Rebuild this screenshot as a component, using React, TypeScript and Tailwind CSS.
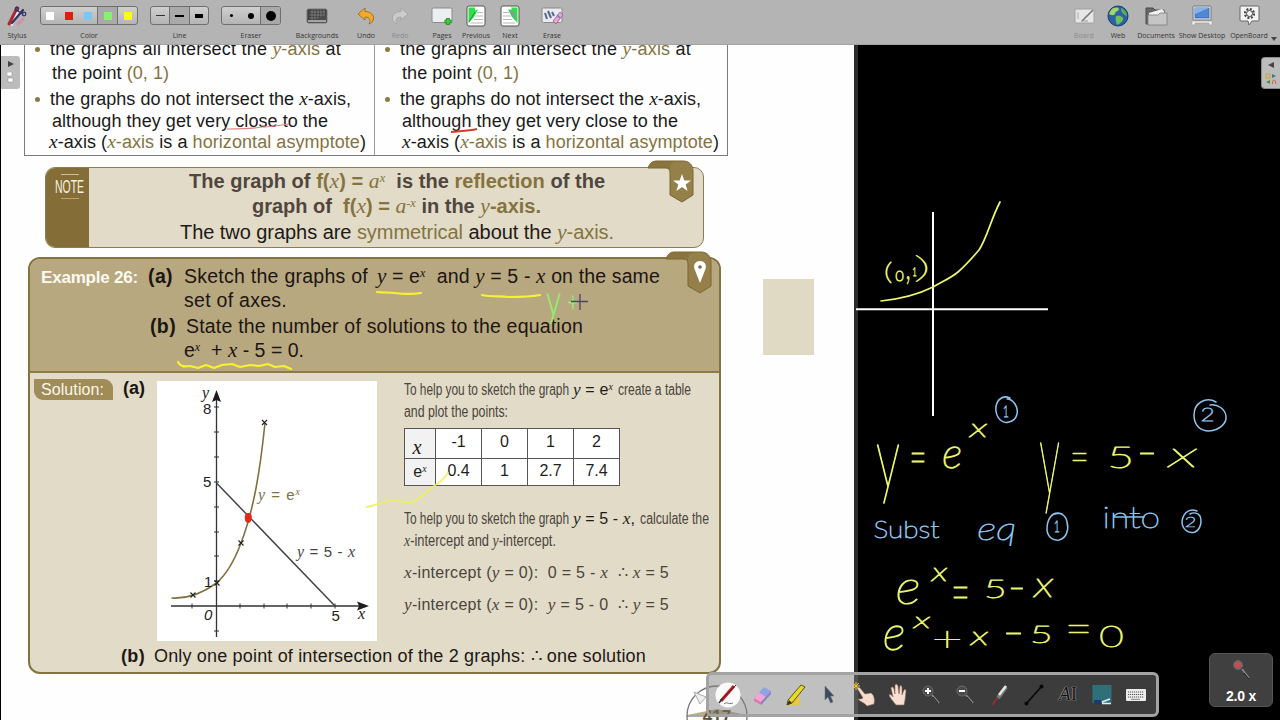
import { useLayoutEffect, useRef, type ReactNode } from "react";

/* ---------- text helpers ---------- */

function Fit({ w, narrow, className = "", children }: { w: number; narrow?: boolean; className?: string; children: ReactNode }) {
  const ref = useRef<HTMLSpanElement>(null);
  useLayoutEffect(() => {
    const el = ref.current;
    if (!el) return;
    el.style.letterSpacing = "0px";
    el.style.transform = "none";
    const natural = el.getBoundingClientRect().width;
    if (narrow) {
      el.style.transform = `scaleX(${w / natural})`;
    } else {
      const count = (el.textContent || "").length;
      el.style.letterSpacing = `${(w - natural) / count}px`;
    }
  }, [w, narrow]);
  return (
    <span className={`block shrink-0 whitespace-pre ${className}`} style={{ width: w }}>
      <span ref={ref} className="inline-block origin-left">
        {children}
      </span>
    </span>
  );
}

const V = ({ children }: { children: ReactNode }) => (
  <i className="font-['Liberation_Serif',serif] text-[1.08em] leading-none font-normal italic">{children}</i>
);
const Sup = ({ children }: { children: ReactNode }) => (
  <i className="relative -top-[0.5em] font-['Liberation_Serif',serif] text-[0.62em] leading-none font-normal italic">{children}</i>
);
const Br = ({ children }: { children: ReactNode }) => <span className="text-[#84733f]">{children}</span>;

/* ---------- pen writing ---------- */

const ctx = document.createElement("canvas").getContext("2d")!;

type InkProps = { t: string; x: number; y: number; w: number; h: number; c?: string; slant?: boolean; sw?: number };

function Ink({ t, x, y, w, h, c = "#e9f36c", slant, sw = 0.9 }: InkProps) {
  ctx.font = `${slant ? "italic " : ""}100 100px Lato`;
  const m = ctx.measureText(t);
  const iw = m.actualBoundingBoxRight + m.actualBoundingBoxLeft;
  const ih = m.actualBoundingBoxAscent + m.actualBoundingBoxDescent;
  const sx = w / iw;
  const sy = h / ih;
  const tx = x + m.actualBoundingBoxLeft * sx;
  const ty = y + m.actualBoundingBoxAscent * sy;
  return (
    <text
      transform={`matrix(${sx} 0 0 ${sy} ${tx} ${ty})`}
      fill={c}
      stroke={c}
      strokeWidth={sw}
      strokeLinejoin="round"
      vectorEffect="non-scaling-stroke"
      className={slant ? "font-['Lato',sans-serif] text-[100px] font-thin italic" : "font-['Lato',sans-serif] text-[100px] font-thin"}
    >
      {t}
    </text>
  );
}

const BLUE = "#8cc4ee";

function BoardInk() {
  return (
    <svg className="pointer-events-none absolute inset-0" width="1280" height="720" viewBox="0 0 1280 720" fill="none">
      <path d="M933 212V416M856 309.3H1048" stroke="#fff" strokeWidth="2" />
      <path d="M881 301C900 299 917 295 933 287C943 281 951 278 958 272C966 265 973 257 979 250C987 238 991 219 1000 202" stroke="#eef56a" strokeWidth="1.7" strokeLinecap="round" />
      <Ink t="(" x={886} y={262} w={5} h={21} sw={1.1} />
      <Ink t="0" x={896} y={271} w={7} h={10} sw={1.1} />
      <Ink t="," x={907} y={276} w={2} h={8} />
      <Ink t="1" x={913} y={268} w={3} h={8} />
      <Ink t=")" x={916} y={255} w={11} h={27} sw={0.8} />

      <Ink t="y" x={877} y={444} w={22} h={58} sw={1.3} />
      <Ink t="=" x={912} y={452} w={12} h={9} sw={1} />
      <Ink t="e" x={944} y={447} w={16} h={21} slant sw={1.3} />
      <Ink t="x" x={969} y={424} w={18} h={13} slant sw={1.3} />
      <Ink t="y" x={1040} y={442} w={19} h={71} sw={1.3} />
      <Ink t="=" x={1073} y={453} w={13} h={8} sw={1} />
      <Ink t="5" x={1111} y={447} w={19} h={21} sw={1.3} />
      <Ink t="-" x={1140} y={453} w={14} h={1} sw={0.8} />
      <Ink t="x" x={1167} y={449} w={30} h={18} slant sw={1.3} />

      <g stroke={BLUE} strokeWidth="1.5" strokeLinecap="round">
        <path d="M1010 398C1001 394 995 402 996 411C997 419 1003 424 1009 422C1018 420 1019 410 1015 404C1013 401 1010 399 1007 399" />
        <path d="M1216 402C1206 396 1194 403 1194 415C1194 425 1200 431 1209 431C1219 430 1227 424 1226 416C1225 409 1218 404 1210 405" />
        <path d="M1062 514C1051 510 1047 521 1047 529C1047 536 1052 541 1059 540C1067 538 1069 529 1067 522C1066 515 1060 512 1055 514" />
        <path d="M1197 511C1188 507 1182 515 1182 523C1183 530 1189 534 1195 532C1201 529 1202 521 1200 516C1198 513 1194 512 1190 514" />
        <path d="M1114 517H1144" />
      </g>
      <Ink t="1" x={1004} y={406} w={4} h={11} c={BLUE} />
      <Ink t="2" x={1202} y={408} w={11} h={13} c={BLUE} sw={1} />
      <Ink t="Subst" x={875} y={520} w={64} h={18} c={BLUE} sw={1} />
      <Ink t="eq" x={979} y={524} w={35} h={22} c={BLUE} slant sw={1} />
      <Ink t="1" x={1055} y={521} w={4} h={11} c={BLUE} />
      <Ink t="into" x={1105} y={507} w={53} h={21} c={BLUE} sw={0.9} />
      <Ink t="2" x={1186} y={517} w={9} h={10} c={BLUE} sw={0.9} />

      <Ink t="e" x={898} y={580} w={20} h={24} slant sw={1.3} />
      <Ink t="x" x={931} y={568} w={16} h={13} slant sw={1.3} />
      <Ink t="=" x={954} y={587} w={13} h={11} sw={1} />
      <Ink t="5" x={987} y={580} w={16} h={18} sw={1.3} />
      <Ink t="-" x={1011} y={587.5} w={12} h={1} sw={0.8} />
      <Ink t="x" x={1033} y={579} w={20} h={18} slant sw={1.3} />

      <Ink t="e" x={885} y={625} w={18} h={25} slant sw={1.3} />
      <Ink t="x" x={913} y={617} w={17} h={11} slant sw={1.3} />
      <Ink t="+" x={935} y={631} w={25} h={17} sw={1.1} />
      <Ink t="x" x={970} y={632} w={18} h={13} slant sw={1.3} />
      <Ink t="-" x={1006} y={633} w={15} h={1} sw={0.8} />
      <Ink t="5" x={1033} y={626} w={16} h={17} sw={1.3} />
      <Ink t="=" x={1069} y={626} w={19} h={7} sw={1} />
      <Ink t="0" x={1101} y={626} w={21} h={21} sw={1.3} />

      <path d="M227 129C242 129 252 129 262 127C272 127 280 125 289 124" stroke="#d98a80" strokeWidth="1.1" />
      <path d="M451 132C460 131 468 131 477 129" stroke="#d83a2e" strokeWidth="2" />
      <g stroke="#f6f22e" strokeWidth="2.2" strokeLinecap="round" strokeLinejoin="round">
        <path d="M377 292C384 293 389 292 395 293C402 294 414 294 421 293" />
        <path d="M482 295C490 297 500 296 509 297C520 297 530 297 540 295" />
        <path d="M178 362C180 366 183 367 190 366L198 368L206 365L214 368L222 365L232 364L240 367L250 365L259 366L268 364L275 367L284 366L291 369" />
      </g>
      <path d="M366 507C374 506 381 502 390 501C398 500 405 503 412 502C421 499 427 490 437 484C442 480 446 478 448 472" stroke="#eef05c" strokeWidth="2" opacity=".85" />
      <Ink t="y" x={547} y={294} w={13} h={28} c="#93ec6e" sw={1.5} />
      <Ink t="+" x={569} y={296} w={8} h={13} c="#93ec6e" sw={1.3} />
      <path d="M571 301.500H588M580 294V310" stroke="#4a4466" strokeWidth="1.3" />
      <path d="M248 514C245 514 245 521 248 522C251 522 252 515 249 514Z" fill="#e02a1c" stroke="#e02a1c" strokeWidth="2" />
    </svg>
  );
}

/* ---------- top toolbar ---------- */

function Tool({ label, className, dim, children }: { label: string; className: string; dim?: boolean; children?: ReactNode }) {
  return (
    <div className={`flex h-full shrink-0 flex-col items-center ${className}`}>
      <div className="flex h-[31px] items-center justify-center">{children}</div>
      <span className={`text-[7px] leading-[9px] whitespace-nowrap ${dim ? "text-[#8c8c8c]" : "text-[#343434]"}`}>{label}</span>
    </div>
  );
}

const group = "flex h-[19px] overflow-hidden rounded-[3px] border border-[#6f6f6f] bg-linear-to-b from-[#cfcfcf] to-[#b4b4b4]";
const cell = "flex flex-1 items-center justify-center";

function TopBar() {
  return (
    <header className="flex h-[45px] shrink-0 border-b border-[#a2a2a2] bg-[#b4b4b4] font-['Open_Sans',sans-serif]">
      <Tool label="Stylus" className="w-[34px]">
        <svg width="22" height="22" viewBox="0 0 22 22" fill="none" strokeLinecap="round">
          <path d="M3 19L11 3" stroke="#b3262e" strokeWidth="3" />
          <path d="M6 20L13 5" stroke="#e9e9ee" strokeWidth="2" />
          <path d="M6 18L17 5" stroke="#2c3566" strokeWidth="2.2" />
          <path d="M10 5L17 9" stroke="#2c3566" strokeWidth="1.4" />
          <circle cx="11" cy="4" r="1.800" stroke="#2c3566" strokeWidth="1.2" />
          <circle cx="18" cy="9" r="1.800" stroke="#2c3566" strokeWidth="1.200" />
          <path d="M12 19L17 14" stroke="#d58cb4" strokeWidth="3" />
        </svg>
      </Tool>
      <Tool label="Color" className="ml-[6px] w-[98px]">
        <div className={`${group} w-[98px]`}>
          <div className={cell}><i className="size-[8px] bg-white" /></div>
          <div className={cell}><i className="size-[8px] bg-[#dd1f0e]" /></div>
          <div className={cell}><i className="size-[8px] bg-[#7cc6f6]" /></div>
          <div className={`${cell} border-x border-[#6f6f6f] bg-[#a9a9a9]`}><i className="size-[8px] bg-[#86f26a]" /></div>
          <div className={cell}><i className="size-[8px] bg-[#fbfb14]" /></div>
        </div>
      </Tool>
      <Tool label="Line" className="ml-[12px] w-[59px]">
        <div className={`${group} w-[59px]`}>
          <div className={cell}><i className="h-px w-[9px] bg-[#333]" /></div>
          <div className={`${cell} border-x border-[#6f6f6f] bg-[#a9a9a9]`}><i className="h-[2px] w-[9px] bg-black" /></div>
          <div className={cell}><i className="h-[4px] w-[8px] bg-black" /></div>
        </div>
      </Tool>
      <Tool label="Eraser" className="ml-[12px] w-[60px]">
        <div className={`${group} w-[60px]`}>
          <div className={cell}><i className="size-[3px] rounded-full bg-black" /></div>
          <div className={cell}><i className="size-[6px] rounded-full bg-black" /></div>
          <div className={`${cell} border-l border-[#6f6f6f] bg-[#a9a9a9]`}><i className="size-[10px] rounded-full bg-black" /></div>
        </div>
      </Tool>
      <Tool label="Backgrounds" className="ml-[11px] w-[50px]">
        <svg width="22" height="16" viewBox="0 0 22 16">
          <rect x="1" y="1" width="20" height="14" rx="1.500" fill="#3c3c3c" stroke="#777" />
          <path d="M3 4H19M3 7H19M3 10H19M6 2V14M9 2V14M12 2V14M15 2V14M18 2V14" stroke="#8d8d8d" strokeWidth=".7" />
          <path d="M2 14L20 7V14Z" fill="#4a4a4a" />
          <path d="M2 13H20" stroke="#c4c4c4" strokeWidth="1.500" />
        </svg>
      </Tool>
      <Tool label="Undo" className="ml-[7px] w-[34px]">
        <svg width="18" height="18" viewBox="0 0 18 18">
          <path d="M1 7L8 1V4.500C14 4.500 17 8 16.500 12C16 15 14 16.500 12 17C14 13.500 13 10 8 10V13Z" fill="#f1ab2b" stroke="#8f641d" strokeWidth=".8" strokeLinejoin="round" />
        </svg>
      </Tool>
      <Tool label="Redo" dim className="w-[34px]">
        <svg width="18" height="18" viewBox="0 0 18 18">
          <path d="M17 7L10 1V4.500C4 4.500 1 8 1.500 12C2 15 4 16.500 6 17C4 13.500 5 10 10 10V13Z" fill="#cbcbcb" stroke="#a0a0a0" strokeWidth=".8" strokeLinejoin="round" />
        </svg>
      </Tool>
      <Tool label="Pages" className="ml-[8px] w-[34px]">
        <svg width="23" height="20" viewBox="0 0 23 20">
          <rect x="1" y="2" width="20" height="14.500" rx="1.500" fill="#eceef0" stroke="#8a8a8a" />
          <path d="M17 12V19M13.500 15.500H20.500" stroke="#1e7c1e" strokeWidth="3.600" />
          <path d="M17 12.600V18.400M14.100 15.500H19.900" stroke="#35d435" strokeWidth="2" />
        </svg>
      </Tool>
      <Tool label="Previous" className="w-[34px]">
        <svg width="20" height="22" viewBox="0 0 20 22">
          <rect x="1" y="1" width="18" height="20" rx="2" fill="#fff" stroke="#555" />
          <path d="M11 7.500H17M9 11H17M8 14.500H17M5 18H17" stroke="#b9b9b9" />
          <path d="M2.500 2.500H9V5.500L12 4.500L8 12L2.500 18Z" fill="#2fe04a" />
          <path d="M3 17L9 7" stroke="#2c8c3c" />
        </svg>
      </Tool>
      <Tool label="Next" className="w-[34px]">
        <svg width="20" height="22" viewBox="0 0 20 22">
          <rect x="1" y="1" width="18" height="20" rx="2" fill="#fff" stroke="#555" />
          <path d="M3 7.500H9M3 11H11M3 14.500H12M3 18H15" stroke="#b9b9b9" />
          <path d="M17.500 2.500H11L12 4.500L8 4.500L12 12L17.500 18Z" fill="#2fe04a" />
          <path d="M16 16L9 5.500L14 6Z" fill="#7d9f94" />
        </svg>
      </Tool>
      <Tool label="Erase" className="ml-[8px] w-[34px]">
        <svg width="23" height="20" viewBox="0 0 23 20">
          <rect x="1" y="2" width="20" height="14.500" rx="1.500" fill="#e9ebf0" stroke="#8a8a8a" />
          <path d="M4 7L6 13M7 5L10 12M11 6L13 10" stroke="#53658f" strokeWidth="2" />
          <path d="M12 15L19 6L22 9L15 18Z" fill="#f0a3c4" stroke="#7c5a9a" strokeWidth=".7" />
          <path d="M16 9L19 12" stroke="#6a78c9" strokeWidth="1.300" />
        </svg>
      </Tool>
      <Tool label="Board" dim className="ml-auto w-[34px]">
        <svg width="21" height="18" viewBox="0 0 21 18">
          <rect x="1" y="2" width="19" height="14" rx="1" fill="#e6e6e6" stroke="#a0a0a0" />
          <path d="M4 5V12" stroke="#aaa" /><path d="M8 14L19 3" stroke="#777" strokeWidth="1.600" /><path d="M7 14H14" stroke="#999" />
        </svg>
      </Tool>
      <Tool label="Web" className="w-[34px]">
        <svg width="22" height="22" viewBox="0 0 22 22">
          <circle cx="11" cy="11" r="10" fill="#2c63a8" stroke="#173a6c" />
          <path d="M4 5C7 2 11 2 12 4C11 7 8 6 8 9C6 11 4 10 2 9Z" fill="#9fd66c" />
          <path d="M9 11C13 10 17 12 16 15C14 18 12 19 10 20C9 17 8 14 9 11Z" fill="#6cc05a" />
          <path d="M14 3C18 4 20 8 20 11C17 10 14 8 14 3Z" fill="#58ad55" />
        </svg>
      </Tool>
      <Tool label="Documents" className="w-[42px]">
        <svg width="23" height="20" viewBox="0 0 23 20">
          <path d="M1 2H8L10 4H19V18H1Z" fill="#686868" stroke="#4b4b4b" />
          <path d="M4 7L17 3L19 5V9H4Z" fill="#f2f2f2" />
          <path d="M3 9H13L15 7H22V19H3Z" fill="#c5c5c5" stroke="#7c7c7c" strokeWidth=".8" />
        </svg>
      </Tool>
      <Tool label="Show Desktop" className="w-[50px]">
        <svg width="22" height="21" viewBox="0 0 22 21">
          <rect x="2" y="1" width="18" height="14" rx="1" fill="#e9e9e9" stroke="#777" />
          <rect x="4" y="3" width="14" height="10" fill="#4f86d6" stroke="#2e5aa0" strokeWidth=".7" />
          <path d="M4 3H18L4 9Z" fill="#86b1ea" />
          <path d="M1 20V16H21V20H18V18H4V20Z" fill="#f3f3f3" stroke="#999" strokeWidth=".6" />
        </svg>
      </Tool>
      <Tool label="OpenBoard" className="w-[44px]">
        <svg width="21" height="22" viewBox="0 0 21 22">
          <path d="M2 1H19Q20 1 20 2V15Q20 16 19 16H13L10 20L9 16H2Q1 16 1 15V2Q1 1 2 1Z" fill="#f4f4f4" stroke="#666" />
          <circle cx="10.500" cy="8.500" r="4.500" fill="none" stroke="#444" strokeWidth="2.200" strokeDasharray="2 1.500" />
          <circle cx="10.500" cy="8.500" r="3" fill="none" stroke="#444" />
        </svg>
      </Tool>
      <div className="flex w-[9px] items-end pb-[3px]">
        <svg width="6" height="4" viewBox="0 0 6 4"><path d="M0 0H6L3 4Z" fill="#444" /></svg>
      </div>
    </header>
  );
}

/* ---------- document page ---------- */

function PropertyColumn({ className, end }: { className: string; end: string }) {
  const dot = <i className="mr-[10px] size-[5px] shrink-0 rounded-full bg-[#8a7a46]" />;
  return (
    <div className={`flex flex-col overflow-hidden text-[18px] text-[#1a1a1a] ${className}`}>
      <div className="-mt-[8px] flex h-[24px] items-center pl-[10px] leading-[24px]">
        {dot}
        <Fit w={291}>the graphs all intersect the <Br><V>y</V>-axis</Br> at</Fit>
      </div>
      <div className="-mt-px h-[26px] pl-[27px] leading-[26px]"><Fit w={117}>the point <Br>(0, 1)</Br></Fit></div>
      <div className="flex h-[26px] items-center pl-[10px] leading-[26px]">
        {dot}
        <Fit w={301}>the graphs do not intersect the <V>x</V>-axis,</Fit>
      </div>
      <div className="h-[18px] pl-[27px] leading-[18px]"><Fit w={276}>although they get very close to the</Fit></div>
      <div className={`h-[24px] leading-[24px] ${end}`}>
        <Fit w={317}><V>x</V>-axis (<Br><V>x</V>-axis</Br> is a <Br>horizontal asymptote</Br>)</Fit>
      </div>
    </div>
  );
}

function Ribbon({ pin, className }: { pin?: boolean; className: string }) {
  return (
    <svg className={`absolute ${className}`} width="48" height="44" viewBox="0 0 48 44">
      <path d="M1 8C3 3 5 1 10 1H36C42 1 46 5 46 11V35L35 42L23 35V14C23 10 22 8 18 8Z" fill="#95804a" stroke="#7b672f" />
      <path d="M1 8C3 3 5 1 10 1H30C24 2 23 5 23 12C22 9 21 8 18 8Z" fill="#7f6a34" opacity=".5" />
      {pin ? (
        <>
          <path d="M35 32L29.500 18C28 13 31 10 35 10C39 10 42 13 40.500 18Z" fill="#fff" />
          <circle cx="35" cy="16" r="1.800" fill="#766a4a" />
        </>
      ) : (
        <path d="M35 14L37.300 20.400H44L38.700 24.400L40.600 31L35 27L29.400 31L31.300 24.400L26 20.400H32.700Z" fill="#fff" />
      )}
    </svg>
  );
}

function NoteBox() {
  return (
    <section className="relative mt-[11px] ml-[45px] flex h-[81px] w-[659px] rounded-[10px] border border-[#8b7c52] bg-[#e2dbc7] text-[20px]">
      <div className="flex w-[43px] flex-col items-center rounded-l-[9px] bg-[#846d36] pt-[6px] text-[19px] text-[#f8f3e4]">
        <i className="ml-[4px] h-px w-[18px] bg-[#cdbf96]" />
        <Fit narrow w={29} className="ml-[4px] h-[23px] leading-[24px]">NOTE</Fit>
        <i className="ml-[4px] h-px w-[18px] bg-[#b7a470]" />
      </div>
      <div className="flex flex-col text-[#504640]">
        <div className="ml-[100px] h-[26px] leading-[26px] font-bold"><Fit w={416}>The graph of <Br>f(<V>x</V>) = <V>a</V><Sup>x</Sup></Br>  is the <Br>reflection</Br> of the</Fit></div>
        <div className="ml-[163px] h-[24px] leading-[24px] font-bold"><Fit w={289}>graph of  <Br>f(<V>x</V>) = <V>a</V><Sup>-x</Sup></Br> in the <Br><V>y</V>-axis.</Br></Fit></div>
        <div className="ml-[91px] h-[28px] leading-[29px] text-[#1c1a18]"><Fit w={434}>The two graphs are <Br>symmetrical</Br> about the <Br><V>y</V>-axis.</Br></Fit></div>
      </div>
      <Ribbon className="-top-[8px] left-[601px]" />
    </section>
  );
}

function Cross({ x, y }: { x: number; y: number }) {
  return <path d={`M${x - 2.500} ${y - 2.500}l5 5m0 -5l-5 5`} stroke="#222" strokeWidth="1.100" />;
}

function Chart() {
  const xt = [35, 83, 107, 130, 154, 178];
  const yt = [26, 51, 76, 101, 126, 151, 175, 200, 250];
  return (
    <svg width="220" height="260" viewBox="0 0 220 260" className="block bg-white font-['Liberation_Sans',sans-serif]" fill="none">
      <path d="M14 225H204M59.500 18V256" stroke="#333" strokeWidth="1.300" />
      <path d="M59.500 9L55 21L59.500 19L64 21Z M212 225L200 220.500L202 225L200 229.500Z" fill="#1c1c1c" />
      {xt.map((x) => <path key={x} d={`M${x} 222.500v5`} stroke="#333" />)}
      {yt.map((y) => <path key={y} d={`M57 ${y}h5`} stroke="#333" />)}
      <path d="M59.500 102L178 225" stroke="#444" strokeWidth="1.500" />
      <path d="M14.500 217C30 218 46 212 59.500 202C70 193 78 178 84 162C97 128 103 90 108 42" stroke="#82713f" strokeWidth="1.600" />
      <Cross x={36} y={214} /><Cross x={60} y={202} /><Cross x={84} y={162} /><Cross x={107.500} y={41.500} />
      <g fill="#222" fontSize="15">
        <text x="46" y="33">8</text><text x="46" y="106">5</text><text x="47" y="206">1</text>
        <text x="47" y="239" className="italic">0</text><text x="174.500" y="240">5</text>
        <text x="45" y="17" fontSize="16" className="font-['Liberation_Serif',serif] italic">y</text>
        <text x="201" y="238" fontSize="16" className="font-['Liberation_Serif',serif] italic">x</text>
      </g>
      <g fontSize="15" className="whitespace-pre">
        <text x="101" y="119" fill="#82713f" textLength="42"><tspan fontSize="16" className="font-['Liberation_Serif',serif] italic">y</tspan>{" = e"}<tspan dy="-5" fontSize="10" className="font-['Liberation_Serif',serif] italic">x</tspan></text>
        <text x="140" y="176" fill="#444" textLength="58"><tspan fontSize="16" className="font-['Liberation_Serif',serif] italic">y</tspan>{" = 5 - "}<tspan fontSize="16" className="font-['Liberation_Serif',serif] italic">x</tspan></text>
      </g>
    </svg>
  );
}

const td = "flex items-center justify-center border-r border-b border-[#555]";

function ValueTable() {
  return (
    <div className="mt-[5px] grid h-[58px] w-[216px] grid-cols-[31px_46px_46px_46px_46px] grid-rows-[30px_27px] border-t border-l border-[#555] bg-white text-[16px] text-[#1e1e1e]">
      <div className={`${td} bg-[#f2f2f2] pt-[8px] pr-[6px] text-[19px]`}><V>x</V></div>
      {["-1", "0", "1", "2"].map((v) => <div key={v} className={`${td} pb-[4px]`}>{v}</div>)}
      <div className={`${td} bg-[#f2f2f2]`}><span>e<Sup>x</Sup></span></div>
      {["0.4", "1", "2.7", "7.4"].map((v) => <div key={v} className={`${td} pb-[2px]`}>{v}</div>)}
    </div>
  );
}

function ExampleBox() {
  return (
    <section className="relative mt-[9px] ml-[28px] flex h-[417px] w-[693px] flex-col overflow-visible rounded-[12px] border-2 border-[#85733e] bg-[#e2dbc7]">
      <div className="flex h-[114px] shrink-0 flex-col rounded-t-[10px] border-b-2 border-[#8d7b48] bg-[#b8a880] pt-[4px] text-[19.5px] text-[#1c1511]">
        <div className="flex h-[26px] leading-[26px]">
          <Fit w={97} className="ml-[11px] pt-[2px] text-[17px] font-bold text-[#fdfaf0]">Example 26:</Fit>
          <Fit w={25} className="ml-[10px] font-bold">(a)</Fit>
          <Fit w={184} className="ml-[11px]">Sketch the graphs of</Fit>
          <Fit w={283} className="ml-[9px]"><V>y</V> = e<Sup>x</Sup>  and <V>y</V> = 5 - <V>x</V> on the same</Fit>
        </div>
        <div className="ml-[154px] h-[24px] leading-[23px]"><Fit w={103}>set of axes.</Fit></div>
        <div className="flex h-[26px] leading-[27px]">
          <Fit w={26} className="ml-[120px] font-bold">(b)</Fit>
          <Fit w={397} className="ml-[10px]">State the number of solutions to the equation</Fit>
        </div>
        <div className="ml-[154px] h-[24px] leading-[22px]"><Fit w={120}>e<Sup>x</Sup>  + <V>x</V> - 5 = 0.</Fit></div>
      </div>
      <div className="flex h-[268px] shrink-0">
        <div className="mt-[6px] ml-[4px] h-[21px] w-[79px] rounded-tr-[9px] rounded-bl-[9px] bg-[#9f8c58] pl-[7px] text-[16px] leading-[21px] text-[#fbf7ea]"><Fit w={63}>Solution:</Fit></div>
        <div className="ml-[10px] w-[34px] pt-[3px] text-[18px] leading-[24px] font-bold text-[#1a1512]"><Fit w={22}>(a)</Fit></div>
        <div className="mt-[8px]"><Chart /></div>
        <div className="ml-[27px] flex flex-col pt-[6px] text-[16px] leading-[22px] text-[#4a443c]">
          <div className="flex">
            <Fit narrow w={165}>To help you to sketch the graph</Fit>
            <Fit w={40} className="ml-[4px] text-[#1e1b18]"><V>y</V> = e<Sup>x</Sup></Fit>
            <Fit narrow w={73} className="ml-[5px]">create a table</Fit>
          </div>
          <Fit narrow w={104}>and plot the points:</Fit>
          <ValueTable />
          <div className="mt-[22px] flex">
            <Fit narrow w={165}>To help you to sketch the graph</Fit>
            <Fit w={62} className="ml-[4px] text-[#1e1b18]"><V>y</V> = 5 - <V>x</V>,</Fit>
            <Fit narrow w={69} className="ml-[5px]">calculate the</Fit>
          </div>
          <Fit narrow w={152}><V>x</V>-intercept and <V>y</V>-intercept.</Fit>
          <Fit w={265} className="mt-[10px]"><V>x</V>-intercept (<V>y</V> = 0):  0 = 5 - <V>x</V>  ∴ <V>x</V> = 5</Fit>
          <Fit w={265} className="mt-[10px]"><V>y</V>-intercept (<V>x</V> = 0):  <V>y</V> = 5 - 0  ∴ <V>y</V> = 5</Fit>
        </div>
      </div>
      <div className="mt-[4px] flex h-[24px] text-[18px] leading-[23px] text-[#1c1916]">
        <Fit w={24} className="ml-[91px] font-bold">(b)</Fit>
        <Fit w={492} className="ml-[9px]">Only one point of intersection of the 2 graphs: ∴ one solution</Fit>
      </div>
      <Ribbon pin className="-top-[8px] left-[635px]" />
    </section>
  );
}

/* ---------- floating controls ---------- */

function Lens({ sign }: { sign: string }) {
  return (
    <svg width="22" height="24" viewBox="0 0 22 24" fill="none">
      <circle cx="7" cy="8" r="5" fill="#4a4a4a" stroke="#6c6c6c" />
      <path d={sign} stroke="#fff" strokeWidth="2" />
      <path d="M11 12L18 20" stroke="#8a8a8a" strokeWidth="1.800" />
      <path d="M12 14L17 20" stroke="#222" />
    </svg>
  );
}

function Palette() {
  const slot = "flex w-[34px] items-center justify-center";
  return (
    <div className="absolute top-[672px] left-[706px] flex h-[45px] w-[453px] rounded-[6px] border-[3px] border-[#a3a3a3] bg-[rgba(125,125,125,0.48)] pl-[2px]">
      <div className={slot}>
        <svg width="26" height="26" viewBox="0 0 26 26" fill="none">
          <circle cx="13" cy="13" r="12.500" fill="#fafafa" />
          <path d="M6 19L19 4" stroke="#b3252b" strokeWidth="3.200" /><path d="M7 17L21 3" stroke="#6c1218" strokeWidth="1" />
          <path d="M4 21L7 17" stroke="#333" strokeWidth="1.500" /><path d="M9 22C12 19 13 23 18 21" stroke="#777" />
        </svg>
      </div>
      <div className={slot}>
        <svg width="20" height="22" viewBox="0 0 20 22">
          <path d="M2 14L12 3L19 7L9 18Z" fill="#92a2e6" /><path d="M2 14L7 8.500L14 13L9 18Z" fill="#f2a7d2" /><path d="M2 14L9 18V21L2 17Z" fill="#df79b4" /><path d="M9 18L19 7V10L9 21Z" fill="#8b7cc8" />
        </svg>
      </div>
      <div className={slot}>
        <svg width="24" height="24" viewBox="0 0 24 24">
          <path d="M5 20L15 13L17 22H5Z" fill="#f2c52c" opacity=".8" /><path d="M4 17L17 2L21 4L8 20L3 22Z" fill="#e8d827" stroke="#5c5414" /><path d="M3 22L5 17L8 20Z" fill="#333" />
        </svg>
      </div>
      <div className={slot}>
        <svg width="14" height="20" viewBox="0 0 14 20"><path d="M2 1L11 11L7.500 11L10 17L7.500 18L5 12L2 15Z" fill="#3e4860" stroke="#6d7688" strokeWidth=".6" /></svg>
      </div>
      <div className={slot}>
        <svg width="26" height="26" viewBox="0 0 26 26">
          <path d="M1 4H9M5 0V8M2 1L8 7M8 1L2 7" stroke="#e9c43c" />
          <path d="M6 6C7 5 8 5 9 6L14 12L20 11C23 13 24 17 23 22L16 24C13 20 9 20 7 17L10 17L12 16Z" fill="#f7dccd" stroke="#8c6c5c" strokeWidth=".6" />
        </svg>
      </div>
      <div className={slot}>
        <svg width="20" height="24" viewBox="0 0 20 24">
          <path d="M8 22C5 18 2 15 1 12C2 11 4 12 5 14L3 5C4 3 5 4 6 6L7 11L7 2C8 1 9 1 10 3L11 11L12 3C13 2 14 3 14 5L14 12L16 7C17 6 18 7 18 8L17 17L16 22Z" fill="#f8dfd2" stroke="#8c6c5c" strokeWidth=".6" />
        </svg>
      </div>
      <div className={slot}><Lens sign="M7 5V11M4 8H10" /></div>
      <div className={slot}><Lens sign="M4 8H10" /></div>
      <div className={slot}>
        <svg width="20" height="24" viewBox="0 0 20 24" fill="none">
          <path d="M2 22L9 13" stroke="#a02a2a" strokeWidth="1.500" /><path d="M8 15L16 4" stroke="#777" strokeWidth="4" /><path d="M9 12L16 3" stroke="#e6e6e6" strokeWidth="2.600" />
        </svg>
      </div>
      <div className={slot}>
        <svg width="20" height="24" viewBox="0 0 20 24"><path d="M2 21L18 3" stroke="#080808" strokeWidth="1.700" /><circle cx="2.500" cy="20.500" r="2" fill="#080808" /><circle cx="17.500" cy="3.500" r="2" fill="#080808" /></svg>
      </div>
      <div className={`${slot} font-['Liberation_Serif',serif] text-[19px] text-[#111] italic [text-shadow:0_0_1px_#ccc,0_0_1px_#ccc]`}>A<span className="not-italic">I</span></div>
      <div className={slot}>
        <svg width="20" height="22" viewBox="0 0 20 22"><rect x=".5" y="1" width="19" height="18" fill="#2f7078" /><path d="M2 16H9V20H2Z" fill="#20386e" /><path d="M10 18L18 15M10 19.500H19" stroke="#e8eef4" strokeWidth="1.500" /></svg>
      </div>
      <div className={slot}>
        <svg width="20" height="12" viewBox="0 0 20 12"><rect width="20" height="12" rx="1" fill="#ececec" /><path d="M2 3H18M2 5.500H18M2 8H18" stroke="#555" strokeDasharray="1.200 .8" /><path d="M5 10.300H14" stroke="#888" /></svg>
      </div>
    </div>
  );
}

export default function App() {
  return (
    <div className="relative flex h-[720px] w-[1280px] flex-col overflow-hidden bg-black font-['Liberation_Sans',sans-serif]">
      <TopBar />
      <main className="flex min-h-0 flex-1">
        <div className="flex w-[854px] shrink-0 overflow-hidden border-l border-black bg-[#fefefe]">
          <div className="-ml-px flex w-[763px] shrink-0 flex-col">
            <div className="ml-[24px] flex h-[111px] w-[704px] shrink-0 border-x border-b border-[#7a7a7a]">
              <PropertyColumn className="w-[350px] border-r border-[#999]" end="pl-[24px]" />
              <PropertyColumn className="w-[352px]" end="pl-[27px]" />
            </div>
            <NoteBox />
            <ExampleBox />
          </div>
          <div className="mt-[234px] h-[76px] w-[51px] bg-[#e0d9c4]" />
        </div>
        <div className="flex-1 border-l-4 border-[#2b2b2b] bg-black" />
      </main>

      <svg className="absolute top-[680px] left-[684px]" width="66" height="40" viewBox="0 0 66 40" fill="none">
        <circle cx="33" cy="36" r="30" stroke="#777" strokeWidth="1.300" />
        <path d="M10 12L22 17L16 24Z M56 12L44 17L50 24Z" fill="#eee" stroke="#aaa" />
        <path d="M3 35L33 29L63 35Z" fill="#b8ad83" /><path d="M3 36H63" stroke="#555" />
        <text x="33" y="42" textAnchor="middle" fontSize="17" fontWeight="700" fill="#5a5034">417</text>
      </svg>

      <BoardInk />

      <div className="absolute top-[56px] left-0 flex h-[33px] w-[20px] flex-col items-center gap-[5px] rounded-r-[3px] border-l border-black bg-[#bcbcbc] pt-[5px]">
        <svg width="6" height="6" viewBox="0 0 6 6"><path d="M0 0L6 3L0 6Z" fill="#444" /></svg>
        <svg width="7" height="11" viewBox="0 0 7 11"><path d="M0 0H5V4H0Z M1 6H6V10H1Z" fill="#fff" stroke="#888" strokeWidth=".5" /></svg>
      </div>
      <div className="absolute top-[57px] left-[1261px] flex h-[32px] w-[19px] flex-col items-center gap-[5px] rounded-l-[4px] border border-r-0 border-[#8a8a8a] bg-[#bcbcbc] pt-[4px]">
        <svg width="6" height="6" viewBox="0 0 6 6"><path d="M6 0L0 3L6 6Z" fill="#444" /></svg>
        <svg width="12" height="12" viewBox="0 0 12 12" fill="none"><rect x="1" y="1" width="4" height="4" stroke="#c9a92b" /><path d="M7 1L11 3L7 5Z" fill="#2f7b92" /><path d="M1 9L5 7V11Z" fill="#4d8c3f" /><path d="M7.500 11V8L9 7L10.500 8V11" stroke="#cc6b4a" /></svg>
      </div>

      <Palette />

      <div className="absolute top-[653px] left-[1209px] flex h-[54px] w-[64px] flex-col items-center rounded-[6px] border border-[#565656] bg-[#404040] pt-[4px]">
        <svg width="22" height="24" viewBox="0 0 22 24" fill="none">
          <circle cx="8" cy="7" r="4.500" fill="#766" stroke="#666" /><circle cx="8" cy="7" r="3" fill="#cf4a4a" /><path d="M12 11L19 20" stroke="#8b8b8b" strokeWidth="1.600" /><path d="M14 15L19 21" stroke="#1c1c1c" />
        </svg>
        <Fit w={30} className="mt-[6px] text-[14px] leading-[16px] font-bold text-white">2.0 x</Fit>
      </div>
    </div>
  );
}
